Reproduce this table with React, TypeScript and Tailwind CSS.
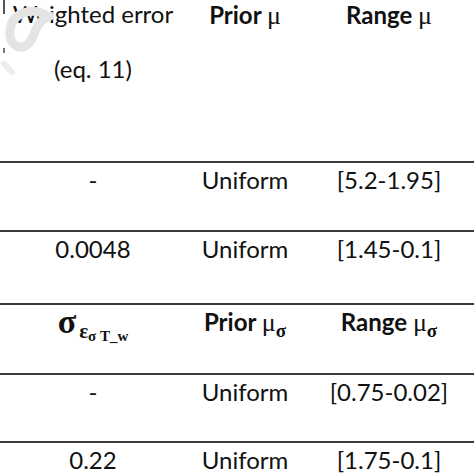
const sans = "font-['Lato','Open_Sans',sans-serif]";
const serif = "font-['Liberation_Serif','Times_New_Roman',serif]";

function Mu({ sub }: { sub?: boolean }) {
  return (
    <span className={`${serif} font-normal text-[26px]`}>
      μ{sub && <span className="relative top-[6px] text-[19px] font-bold">σ</span>}
    </span>
  );
}

const rows = [
  { a: "-", b: "Uniform", c: "[5.2-1.95]", h: "h-[69px]" },
  { a: "0.0048", b: "Uniform", c: "[1.45-0.1]", h: "h-[73px]" },
];

const rows2 = [
  { a: "-", b: "Uniform", c: "[0.75-0.02]", h: "h-[68px]" },
  { a: "0.22", b: "Uniform", c: "[1.75-0.1]", h: "h-[40px]" },
];

function Row({ a, b, c, h }: { a: string; b: string; c: string; h: string }) {
  return (
    <div className={`grid grid-cols-[186px_118px_170px] ${h} border-b-2 border-[#3a3a3a] pt-[3px] leading-[28px] text-[24px] text-[#111]`}>
      <div className="text-center">{a}</div>
      <div className="text-center">{b}</div>
      <div className="text-center">{c}</div>
    </div>
  );
}

export default function App() {
  return (
    <div className={`relative w-[474px] h-[474px] overflow-hidden bg-white ${sans}`}>
      <div className="relative flex flex-col">
        <div className="grid grid-cols-[186px_118px_170px] h-[163px] border-b-2 border-[#3a3a3a] text-[24px] leading-[28px] text-[#111]">
          <div className="flex flex-col items-center pt-0 gap-[27px]">
            <span>Weighted error</span>
            <span>(eq. 11)</span>
          </div>
          <div className="text-center font-bold pt-[1px]">
            Prior <Mu />
          </div>
          <div className="text-center font-bold pt-[1px]">
            Range <Mu />
          </div>
        </div>
        {rows.map((r) => (
          <Row key={r.c} {...r} />
        ))}
        <div className="grid grid-cols-[186px_118px_170px] h-[70px] border-b-2 border-[#3a3a3a] pt-[3px] leading-[28px] text-[24px] text-[#111]">
          <div className="text-center">
            <span className={`${serif} font-bold text-[34px]`}>
              σ
              <span className="relative top-[5px] text-[21px] ml-[3px]">
                ε
                <span className="relative top-[3px] text-[15px]">σ T_w</span>
              </span>
            </span>
          </div>
          <div className="text-center font-bold">
            Prior <Mu sub />
          </div>
          <div className="text-center font-bold">
            Range <Mu sub />
          </div>
        </div>
        {rows2.map((r) => (
          <Row key={r.c} {...r} />
        ))}
      </div>

      {/* watermark loop over the first header */}
      <svg className="absolute left-0 top-0" width="60" height="80" viewBox="0 0 60 80">
        <path d="M44 14 C 32 8, 12 12, 10 30 C 8 44, 20 52, 28 44 C 36 36, 34 22, 50 16" fill="none" stroke="#e4e4e4" strokeWidth="9" strokeLinecap="round" />
        <path d="M4 64 L 12 72" stroke="#ececec" strokeWidth="6" strokeLinecap="round" />
      </svg>
      <div className="absolute left-[3px] top-0 w-[1.5px] h-[14px] bg-[#555]" />
      <div className="absolute left-[3px] top-[48px] w-[1.5px] h-[5px] bg-[#777]" />
    </div>
  );
}
